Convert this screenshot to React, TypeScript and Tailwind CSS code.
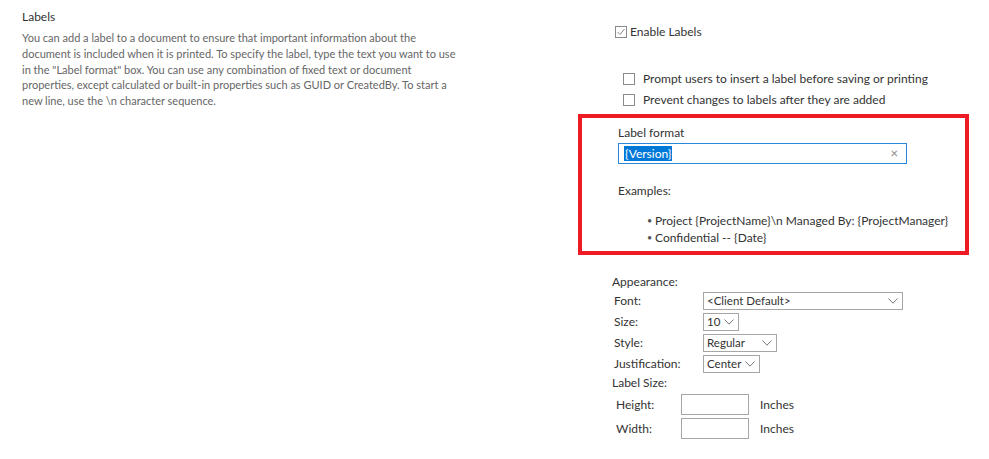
import React from 'react';

const font = { fontFamily: 'Lato, "Noto Sans", sans-serif' };

function Chevron({ className = '' }: { className?: string }) {
  return (
    <svg width="10" height="6" viewBox="0 0 10 6" className={className}>
      <polyline points="0.5,0.5 5,5.2 9.5,0.5" fill="none" stroke="#777" strokeWidth="1" />
    </svg>
  );
}

function Select({ value, width }: { value: string; width: string }) {
  return (
    <div
      className={`${width} h-[18px] border border-[#a6a6a6] flex items-center justify-between pl-[3px] pr-[4px] text-[#333] bg-white`}
    >
      <span className="leading-none text-[11.5px]">{value}</span>
      <Chevron />
    </div>
  );
}

function Box({ checked, className = '' }: { checked?: boolean; className?: string }) {
  return (
    <div className={`w-[12px] h-[12px] border border-[#8a8a8a] bg-white flex items-center justify-center ${className}`}>
      {checked && (
        <svg width="10" height="10" viewBox="0 0 10 10">
          <polyline points="1.5,5 4,7.5 8.5,2" fill="none" stroke="#8a8a8a" strokeWidth="1" />
        </svg>
      )}
    </div>
  );
}

export default function App() {
  return (
    <div className="w-[989px] h-[459px] bg-white flex text-[12px] leading-[16px] text-[#444]" style={font}>
      {/* Left description */}
      <div className="w-[578px] pl-[22px] pt-[9px]">
        <div className="text-[12px] leading-[16px] text-[#333]">Labels</div>
        <p className="mt-[5px] text-[11px] leading-[15.8px] text-[#666]">
          You can add a label to a document to ensure that important information about the
          <br />
          document is included when it is printed. To specify the label, type the text you want to use
          <br />
          in the "Label format" box. You can use any combination of fixed text or document
          <br />
          properties, except calculated or built-in properties such as GUID or CreatedBy. To start a
          <br />
          new line, use the \n character sequence.
        </p>
      </div>

      {/* Right settings */}
      <div className="w-[391px] flex flex-col">
        <div className="mt-[25px] h-[14px] flex items-center pl-[37px]">
          <Box checked />
          <span className="ml-[3px] text-[#333]">Enable Labels</span>
        </div>

        <div className="mt-[33px] flex flex-col gap-[7px] pl-[45px] text-[#333]">
          <div className="h-[14px] flex items-center">
            <Box />
            <span className="ml-[8px]">Prompt users to insert a label before saving or printing</span>
          </div>
          <div className="h-[14px] flex items-center">
            <Box />
            <span className="ml-[8px]">Prevent changes to labels after they are added</span>
          </div>
        </div>

        {/* Highlighted label format block */}
        <div className="mt-[7px] h-[141px] border-[4px] border-[#ed1c24] pl-[36px] pt-[7px] text-[#333]">
          <div className="h-[16px]">Label format</div>
          <div className="mt-[2px] w-[289px] h-[21px] border border-[#2b88d8] flex items-center justify-between pl-[5px] pr-[8px]">
            <span className="bg-[#0078d7] text-white leading-[15px] px-[1px]">{'{Version}'}</span>
            <span className="text-[#888] text-[13px] leading-none">×</span>
          </div>
          <div className="mt-[19px] h-[16px]">Examples:</div>
          <ul className="mt-[13px] pl-[29px] leading-[17px]">
            <li className="flex items-center">
              <span className="w-[8px] text-[9px] text-[#555]">•</span>
              Project {'{ProjectName}'}\n Managed By: {'{ProjectManager}'}
            </li>
            <li className="flex items-center">
              <span className="w-[8px] text-[9px] text-[#555]">•</span>
              Confidential -- {'{Date}'}
            </li>
          </ul>
        </div>

        {/* Appearance */}
        <div className="mt-[19px] pl-[34px] text-[#333]">
          <div className="h-[16px]">Appearance:</div>
          <div className="mt-[2px] flex flex-col gap-[3px]">
            <div className="flex items-center h-[18px]">
              <span className="w-[91px] pl-[2px]">Font:</span>
              <Select value="<Client Default>" width="w-[200px]" />
            </div>
            <div className="flex items-center h-[18px]">
              <span className="w-[91px] pl-[2px]">Size:</span>
              <Select value="10" width="w-[36px]" />
            </div>
            <div className="flex items-center h-[18px]">
              <span className="w-[91px] pl-[2px]">Style:</span>
              <Select value="Regular" width="w-[74px]" />
            </div>
            <div className="flex items-center h-[18px]">
              <span className="w-[91px] pl-[2px]">Justification:</span>
              <Select value="Center" width="w-[57px]" />
            </div>
          </div>
          <div className="mt-[2px] h-[16px]">Label Size:</div>
          <div className="mt-[3px] flex flex-col gap-[3px]">
            <div className="flex items-center">
              <span className="w-[69px] pl-[4px]">Height:</span>
              <div className="w-[68px] h-[21px] border border-[#a6a6a6]" />
              <span className="ml-[11px]">Inches</span>
            </div>
            <div className="flex items-center">
              <span className="w-[69px] pl-[4px]">Width:</span>
              <div className="w-[68px] h-[21px] border border-[#a6a6a6]" />
              <span className="ml-[11px]">Inches</span>
            </div>
          </div>
        </div>
      </div>
    </div>
  );
}
